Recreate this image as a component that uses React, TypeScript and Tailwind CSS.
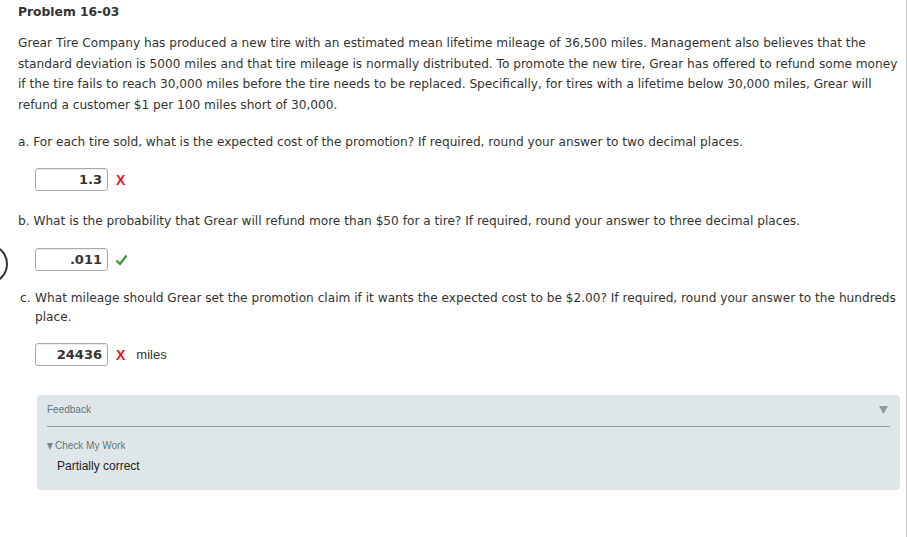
export default function App() {
  const body = "font-['DejaVu_Sans',Verdana,sans-serif] text-[12.15px] text-[#333]";
  return (
    <div className="relative h-[537px] w-[907px] overflow-hidden border-r border-[#c8c8c8] bg-white">
      {/* partial circle peeking from the left edge */}
      <div className="absolute left-[-32px] top-[244px] h-[40px] w-[40px] rounded-full border-2 border-[#333]" />

      <div className={`${body} pl-[18px] pr-[4px]`}>
        <h1 className="pt-[3px] text-[12.3px] font-bold leading-[18px] text-[#333]">Problem 16-03</h1>

        <p className="mt-[12px] w-[880px] leading-[20.6px]">
          Grear Tire Company has produced a new tire with an estimated mean lifetime mileage of 36,500 miles. Management also believes that the standard deviation is 5000 miles and that tire mileage is normally distributed. To promote the new tire, Grear has offered to refund some money if the tire fails to reach 30,000 miles before the tire needs to be replaced. Specifically, for tires with a lifetime below 30,000 miles, Grear will refund a customer $1 per 100 miles short of 30,000.
        </p>

        <p className="mt-[17px] leading-[20px]">
          a. For each tire sold, what is the expected cost of the promotion? If required, round your answer to two decimal places.
        </p>
        <Answer value="1.3" ok={false} className="mt-[16px]" />

        <p className="mt-[20px] leading-[20px]">
          b. What is the probability that Grear will refund more than $50 for a tire? If required, round your answer to three decimal places.
        </p>
        <Answer value=".011" ok={true} className="mt-[17px]" />

        <div className="mt-[18px] flex leading-[19px]">
          <span className="ml-[2px] w-[15px] shrink-0">c.</span>
          <span className="w-[868px]">
            What mileage should Grear set the promotion claim if it wants the expected cost to be $2.00? If required, round your answer to the hundreds place.
          </span>
        </div>
        <Answer value="24436" ok={false} unit="miles" className="mt-[16px]" />
      </div>

      {/* feedback panel */}
      <div className="ml-[37px] mt-[29px] h-[95px] w-[863px] rounded-[4px] bg-[#dfe6e9] px-[10px] pt-[9px] font-['Liberation_Sans',Arial,sans-serif]">
        <div className="flex items-center justify-between border-b border-[#8e9a9c] pb-[10px]">
          <span className="text-[10px] leading-[12px] text-[#5f7777]">Feedback</span>
          <svg className="mr-[2px]" width="9" height="8" viewBox="0 0 9 8">
            <path d="M0 0 H9 L4.5 8 Z" fill="#8f999b" />
          </svg>
        </div>
        <div className="mt-[13px] flex items-center text-[10px] leading-[12px] text-[#5f7777]">
          <svg className="mr-[2px]" width="6" height="7" viewBox="0 0 6 7">
            <path d="M0 0 H6 L3 7 Z" fill="#7d8787" />
          </svg>
          Check My Work
        </div>
        <div className="mt-[7px] pl-[10px] text-[12px] leading-[14px] text-[#222]">Partially correct</div>
      </div>
    </div>
  );
}

function Answer({
  value,
  ok,
  unit,
  className = "",
}: {
  value: string;
  ok: boolean;
  unit?: string;
  className?: string;
}) {
  return (
    <div className={`flex h-[23px] items-center pl-[17px] ${className}`}>
      <div className="flex h-[23px] w-[73px] items-center justify-end rounded-[3px] border border-[#a9a9a9] pr-[5px] shadow-[inset_0_1px_1px_rgba(0,0,0,0.08)]">
        <span className="text-[13px] font-bold text-[#333]">{value}</span>
      </div>
      {ok ? (
        <svg className="ml-[7px]" width="13" height="12" viewBox="0 0 13 12">
          <path d="M1.5 6.5 L5 10 L11.5 1.5" fill="none" stroke="#3a9a3a" strokeWidth="2.2" />
        </svg>
      ) : (
        <span className="ml-[8px] font-['Liberation_Sans',Arial,sans-serif] text-[14px] font-bold leading-none text-[#e8141c]">X</span>
      )}
      {unit && <span className="ml-[11px] font-['Liberation_Sans',Arial,sans-serif] text-[13px] text-[#333]">{unit}</span>}
    </div>
  );
}
